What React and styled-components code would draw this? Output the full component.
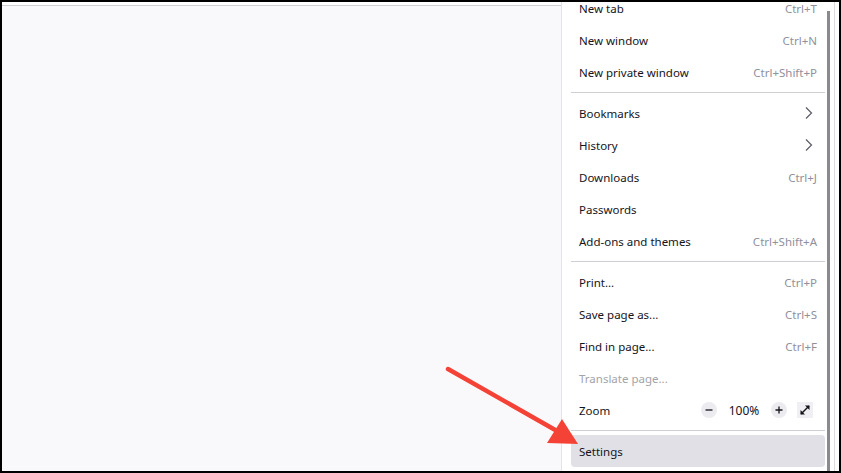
import styled, { createGlobalStyle } from "styled-components";

const Global = createGlobalStyle`
  html, body { margin: 0; padding: 0; background: #000; }
  body { font-family: "Noto Sans", "Open Sans", sans-serif; }
`;

const Frame = styled.div`
  width: 841px;
  height: 473px;
  box-sizing: border-box;
  border: 2px solid #000;
  display: flex;
  overflow: hidden;
  position: relative;
  background: #fff;
`;

const Page = styled.div`
  flex: 1;
  display: flex;
  flex-direction: column;
  background: #f9f9fb;
  border-right: 1px solid #e4e4e8;
`;

const TopStrip = styled.div`
  height: 3px;
  background: #fff;
  border-bottom: 1px solid #cfcfd4;
`;

const Menu = styled.div`
  width: 272px;
  display: flex;
  background: #fff;
  border-right: 1px solid #dcdce0;
`;

const List = styled.div`
  flex: 1;
  margin-top: -10px;
  padding-left: 9px;
  display: flex;
  flex-direction: column;
`;

const Track = styled.div`
  width: 9px;
  display: flex;
  padding: 9px 4px 0 2px;
  box-sizing: border-box;
`;

const Thumb = styled.div`
  flex: 1;
  background: #8a8a8e;
`;

const Item = styled.div`
  height: 32px;
  flex-shrink: 0;
  display: flex;
  align-items: center;
  padding: 0 8px;
  border-radius: 4px;
  font-size: 11.5px;
  color: ${(p) => (p.disabled ? "#a3a3ab" : "#15141a")};
  background: ${(p) => (p.active ? "#e0e0e6" : "transparent")};
`;

const Label = styled.span`
  flex: 1;
`;

const Shortcut = styled.span`
  color: #8f8f9d;
  font-size: 11.5px;
`;

const Separator = styled.div`
  height: 9px;
  flex-shrink: 0;
  display: flex;
  align-items: center;
  &::after {
    content: "";
    flex: 1;
    height: 1px;
    background: #cfcfd8;
  }
`;

const ZoomControls = styled.div`
  display: flex;
  align-items: center;
`;

const RoundBtn = styled.span`
  width: 16px;
  height: 16px;
  border-radius: 50%;
  background: #ececf0;
  display: flex;
  align-items: center;
  justify-content: center;
`;

const Percent = styled.span`
  width: 54px;
  text-align: center;
  font-size: 12px;
  color: #15141a;
`;

const SquareBtn = styled.span`
  width: 16px;
  height: 16px;
  margin-left: 10px;
  margin-right: 4px;
  background: #f0f0f4;
  display: flex;
  align-items: center;
  justify-content: center;
`;

const ChevronIcon = styled.svg`
  margin-right: 3px;
`;

const Edge = styled.div`
  width: 4px;
  background: #fff;
`;

const Arrow = styled.svg`
  position: absolute;
  left: 0;
  top: 0;
  pointer-events: none;
`;

const Chevron = () => (
  <ChevronIcon width="10" height="14" viewBox="0 0 10 14">
    <path d="M2 1.5 L7.5 7 L2 12.5" fill="none" stroke="#5b5b66" strokeWidth="1.2" />
  </ChevronIcon>
);

const Row = ({ label, shortcut, sub, disabled, active }) => (
  <Item disabled={disabled} active={active}>
    <Label>{label}</Label>
    {shortcut && <Shortcut>{shortcut}</Shortcut>}
    {sub && <Chevron />}
  </Item>
);

export default function App() {
  return (
    <>
      <Global />
      <Frame>
        <Page>
          <TopStrip />
        </Page>
        <Menu>
          <List>
            <Row label="New tab" shortcut="Ctrl+T" />
            <Row label="New window" shortcut="Ctrl+N" />
            <Row label="New private window" shortcut="Ctrl+Shift+P" />
            <Separator />
            <Row label="Bookmarks" sub />
            <Row label="History" sub />
            <Row label="Downloads" shortcut="Ctrl+J" />
            <Row label="Passwords" />
            <Row label="Add-ons and themes" shortcut="Ctrl+Shift+A" />
            <Separator />
            <Row label="Print..." shortcut="Ctrl+P" />
            <Row label="Save page as..." shortcut="Ctrl+S" />
            <Row label="Find in page..." shortcut="Ctrl+F" />
            <Row label="Translate page..." disabled />
            <Item>
              <Label>Zoom</Label>
              <ZoomControls>
                <RoundBtn>
                  <svg width="10" height="10" viewBox="0 0 10 10">
                    <path d="M1.5 5 H8.5" stroke="#15141a" strokeWidth="1.3" />
                  </svg>
                </RoundBtn>
                <Percent>100%</Percent>
                <RoundBtn>
                  <svg width="10" height="10" viewBox="0 0 10 10">
                    <path d="M1.5 5 H8.5 M5 1.5 V8.5" stroke="#15141a" strokeWidth="1.3" />
                  </svg>
                </RoundBtn>
                <SquareBtn>
                  <svg width="12" height="12" viewBox="0 0 12 12">
                    <path d="M2 10 L10 2" stroke="#15141a" strokeWidth="1.4" />
                    <path d="M6 1.5 H10.5 V6 Z" fill="#15141a" />
                    <path d="M1.5 6 V10.5 H6 Z" fill="#15141a" />
                  </svg>
                </SquareBtn>
              </ZoomControls>
            </Item>
            <Separator />
            <Row label="Settings" active />
          </List>
          <Track>
            <Thumb />
          </Track>
        </Menu>
        <Edge />
        <Arrow width="841" height="473" viewBox="0 0 841 473">
          <line x1="446" y1="367" x2="555" y2="429" stroke="#f44336" strokeWidth="4.5" strokeLinecap="round" />
          <polygon points="576,442 545,441 560,417" fill="#f44336" />
        </Arrow>
      </Frame>
    </>
  );
}
